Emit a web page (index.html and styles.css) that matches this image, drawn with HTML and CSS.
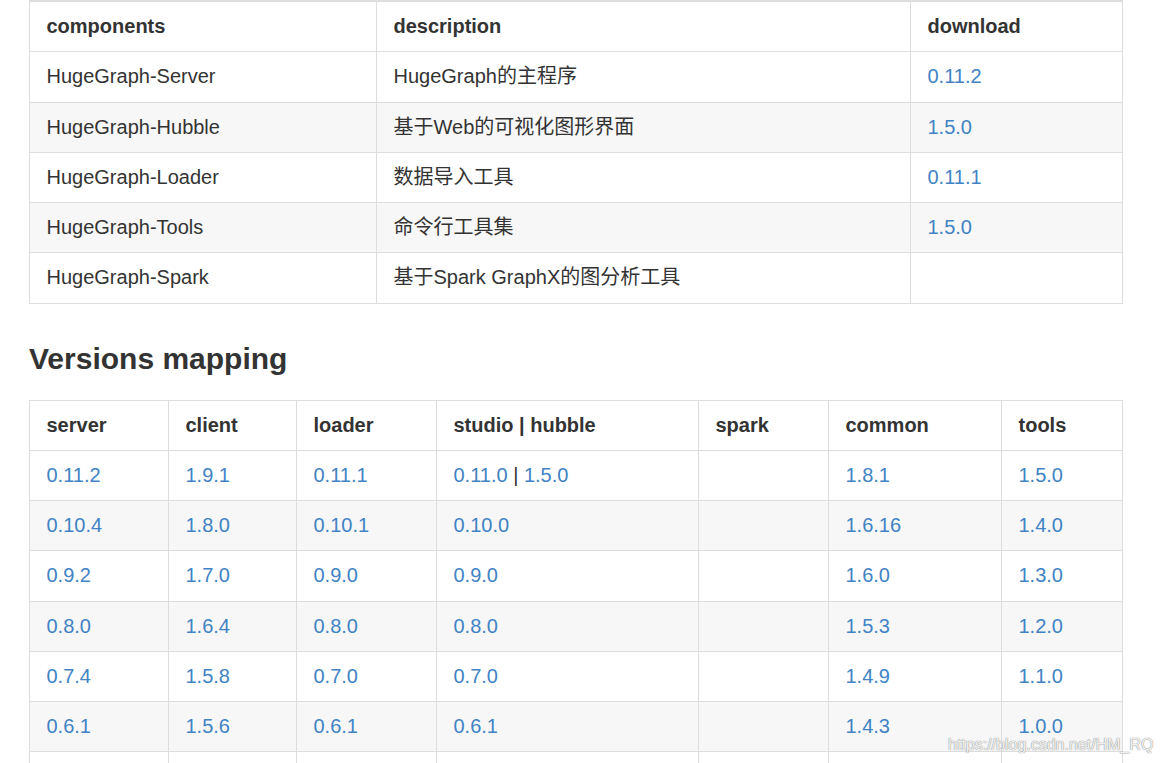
FILE: index.html
```html
<!DOCTYPE html>
<html lang="zh">
<head>
<meta charset="utf-8">
<title>HugeGraph Download</title>
<link rel="stylesheet" href="styles.css">
</head>
<body>
<main class="content">
  <table class="tbl tbl-components">
    <colgroup>
      <col class="c1"><col class="c2"><col class="c3">
    </colgroup>
    <thead>
      <tr><th>components</th><th>description</th><th>download</th></tr>
    </thead>
    <tbody>
      <tr><td>HugeGraph-Server</td><td>HugeGraph的主程序</td><td><a href="#">0.11.2</a></td></tr>
      <tr><td>HugeGraph-Hubble</td><td>基于Web的可视化图形界面</td><td><a href="#">1.5.0</a></td></tr>
      <tr><td>HugeGraph-Loader</td><td>数据导入工具</td><td><a href="#">0.11.1</a></td></tr>
      <tr><td>HugeGraph-Tools</td><td>命令行工具集</td><td><a href="#">1.5.0</a></td></tr>
      <tr><td>HugeGraph-Spark</td><td>基于Spark GraphX的图分析工具</td><td></td></tr>
    </tbody>
  </table>

  <h2 class="section-title">Versions mapping</h2>

  <table class="tbl tbl-versions">
    <colgroup>
      <col class="v1"><col class="v2"><col class="v3"><col class="v4"><col class="v5"><col class="v6"><col class="v7">
    </colgroup>
    <thead>
      <tr><th>server</th><th>client</th><th>loader</th><th>studio | hubble</th><th>spark</th><th>common</th><th>tools</th></tr>
    </thead>
    <tbody>
      <tr><td><a href="#">0.11.2</a></td><td><a href="#">1.9.1</a></td><td><a href="#">0.11.1</a></td><td><a href="#">0.11.0</a> | <a href="#">1.5.0</a></td><td></td><td><a href="#">1.8.1</a></td><td><a href="#">1.5.0</a></td></tr>
      <tr><td><a href="#">0.10.4</a></td><td><a href="#">1.8.0</a></td><td><a href="#">0.10.1</a></td><td><a href="#">0.10.0</a></td><td></td><td><a href="#">1.6.16</a></td><td><a href="#">1.4.0</a></td></tr>
      <tr><td><a href="#">0.9.2</a></td><td><a href="#">1.7.0</a></td><td><a href="#">0.9.0</a></td><td><a href="#">0.9.0</a></td><td></td><td><a href="#">1.6.0</a></td><td><a href="#">1.3.0</a></td></tr>
      <tr><td><a href="#">0.8.0</a></td><td><a href="#">1.6.4</a></td><td><a href="#">0.8.0</a></td><td><a href="#">0.8.0</a></td><td></td><td><a href="#">1.5.3</a></td><td><a href="#">1.2.0</a></td></tr>
      <tr><td><a href="#">0.7.4</a></td><td><a href="#">1.5.8</a></td><td><a href="#">0.7.0</a></td><td><a href="#">0.7.0</a></td><td></td><td><a href="#">1.4.9</a></td><td><a href="#">1.1.0</a></td></tr>
      <tr><td><a href="#">0.6.1</a></td><td><a href="#">1.5.6</a></td><td><a href="#">0.6.1</a></td><td><a href="#">0.6.1</a></td><td></td><td><a href="#">1.4.3</a></td><td><a href="#">1.0.0</a></td></tr>
      <tr><td></td><td></td><td></td><td></td><td></td><td></td><td></td></tr>
    </tbody>
  </table>
</main>
<div class="watermark">https://blog.csdn.net/HM_RQ</div>
</body>
</html>
```

FILE: styles.css
```css
html, body {
  margin: 0;
  padding: 0;
  background: #ffffff;
}

body {
  font-family: "Liberation Sans", Arial, "Noto Sans CJK SC", sans-serif;
  font-size: 20px;
  color: #333333;
  overflow: hidden;
  height: 763px;
  position: relative;
}

.content {
  padding: 0 0 0 29px;
  width: 1093px;
}

.tbl {
  border-collapse: collapse;
  table-layout: fixed;
  width: 1093px;
}

.tbl th,
.tbl td {
  border: 1px solid #dddddd;
  padding: 12px 16px 13.25px 16.5px;
  line-height: 24px;
  height: 24px;
  text-align: left;
  vertical-align: middle;
  white-space: nowrap;
}

.tbl-components th {
  border-top-width: 2px;
}

.tbl th {
  font-weight: bold;
}

.tbl tbody tr:nth-child(even) {
  background: #f7f7f7;
}

.tbl a {
  color: #4183c4;
  text-decoration: none;
}

.c1 { width: 347px; }
.c2 { width: 534px; }
.c3 { width: 212px; }

.v1 { width: 139px; }
.v2 { width: 128px; }
.v3 { width: 140px; }
.v4 { width: 262px; }
.v5 { width: 130px; }
.v6 { width: 173px; }
.v7 { width: 121px; }

.section-title {
  font-size: 30px;
  font-weight: bold;
  line-height: 33px;
  margin: 38px 0 25px 0;
  color: #333333;
}

.watermark {
  position: absolute;
  left: 948px;
  top: 735px;
  font-family: "Liberation Sans", Arial, sans-serif;
  font-size: 16px;
  line-height: 20px;
  color: rgba(255, 255, 255, 0.9);
  text-shadow: 0 0 1px rgba(110, 110, 110, 0.8), 0 0 1px rgba(110, 110, 110, 0.6);
  pointer-events: none;
}
```
